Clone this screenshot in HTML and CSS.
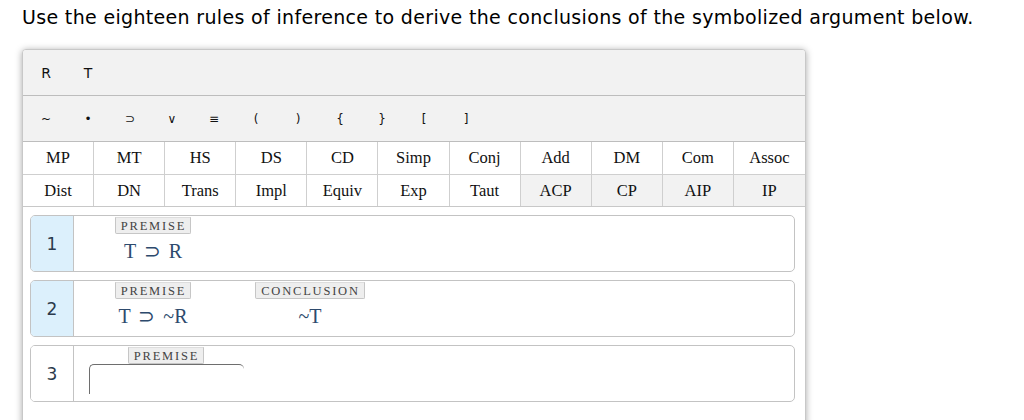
FILE: index.html
```html
<!DOCTYPE html>
<html>
<head>
<meta charset="utf-8">
<link rel="stylesheet" href="styles.css">
</head>
<body>
<p class="title">Use the eighteen rules of inference to derive the conclusions of the symbolized argument below.</p>
<div class="panel">
  <div class="bar vars">
    <span class="key">R</span><span class="key">T</span>
  </div>
  <div class="bar syms">
    <span class="key sym">~</span><span class="key sym">•</span><span class="key sym">⊃</span><span class="key sym">∨</span><span class="key sym">≡</span><span class="key sym">(</span><span class="key sym">)</span><span class="key sym">{</span><span class="key sym">}</span><span class="key sym">[</span><span class="key sym">]</span>
  </div>
  <div class="rules">
    <span class="rule">MP</span><span class="rule">MT</span><span class="rule">HS</span><span class="rule">DS</span><span class="rule">CD</span><span class="rule">Simp</span><span class="rule">Conj</span><span class="rule">Add</span><span class="rule">DM</span><span class="rule">Com</span><span class="rule">Assoc</span>
    <span class="rule">Dist</span><span class="rule">DN</span><span class="rule">Trans</span><span class="rule">Impl</span><span class="rule">Equiv</span><span class="rule">Exp</span><span class="rule">Taut</span><span class="rule alt">ACP</span><span class="rule alt">CP</span><span class="rule alt">AIP</span><span class="rule alt">IP</span>
  </div>
  <div class="lines">
    <div class="line">
      <div class="num given">1</div>
      <div class="body">
        <div class="block">
          <span class="tag">PREMISE</span>
          <span class="formula">T ⊃ R</span>
        </div>
      </div>
    </div>
    <div class="line">
      <div class="num given">2</div>
      <div class="body">
        <div class="block">
          <span class="tag">PREMISE</span>
          <span class="formula">T ⊃ ~R</span>
        </div>
        <div class="block concl">
          <span class="tag">CONCLUSION</span>
          <span class="formula">~T</span>
        </div>
      </div>
    </div>
    <div class="line">
      <div class="num">3</div>
      <div class="body">
        <div class="block entry">
          <span class="tag">PREMISE</span>
          <span class="input"></span>
        </div>
      </div>
    </div>
  </div>
</div>
</body>
</html>
```
FILE: styles.css
```css
html, body {
  margin: 0;
  padding: 0;
  background: #ffffff;
}
body {
  padding: 6px 0 0 22px;
  font-family: "DejaVu Sans", Verdana, sans-serif;
  color: #000;
}
.title {
  margin: 0;
  font-size: 19px;
  line-height: 23px;
  letter-spacing: 0.33px;
  font-weight: normal;
  white-space: nowrap;
}
.panel {
  margin-top: 20px;
  width: 782px;
  height: 400px;
  border: 1px solid #c8c8c8;
  border-radius: 4px 4px 0 0;
  box-shadow: 0 1px 7px rgba(0, 0, 0, 0.35);
  background: #ffffff;
  overflow: hidden;
}
.bar {
  display: flex;
  align-items: center;
  padding-left: 2px;
  background: #f2f2f2;
  border-bottom: 1px solid #bdbdbd;
}
.vars {
  height: 45px;
}
.syms {
  height: 45px;
}
.key {
  width: 42px;
  text-align: center;
  font-size: 14px;
  color: #111;
}
.sym {
  font-size: 12px;
}
.rules {
  display: grid;
  grid-template-columns: repeat(11, 1fr);
  border-bottom: 1px solid #c8c8c8;
}
.rule {
  height: 32px;
  line-height: 32px;
  text-align: center;
  font-family: "Liberation Serif", "Times New Roman", serif;
  font-size: 16.5px;
  color: #111;
  background: #ffffff;
  border-right: 1px solid #cfcfcf;
  border-bottom: 1px solid #cfcfcf;
}
.rule:nth-child(11n) {
  border-right: none;
}
.rule:nth-child(n+12) {
  border-bottom: none;
  height: 31px;
  line-height: 31px;
}
.rule.alt {
  background: #f2f2f2;
}
.lines {
  display: flex;
  flex-direction: column;
  gap: 8px;
  padding: 8px 10px 0 7px;
}
.line {
  display: flex;
  height: 55px;
  border: 1px solid #c3c3c3;
  border-radius: 5px;
  overflow: hidden;
}
.num {
  width: 42px;
  flex: none;
  display: flex;
  align-items: center;
  justify-content: center;
  font-size: 17px;
  color: #2b3a4c;
  border-right: 1px solid #c3c3c3;
  background: #ffffff;
}
.num.given {
  background: #dcf0fc;
}
.body {
  display: flex;
  padding-left: 14px;
}
.block {
  width: 130px;
  display: flex;
  flex-direction: column;
  align-items: center;
}
.concl {
  margin-left: 27px;
}
.tag {
  margin-top: 1px;
  padding: 0 4px 0 5px;
  height: 15px;
  line-height: 16px;
  font-family: "Liberation Serif", "Times New Roman", serif;
  font-size: 12.5px;
  letter-spacing: 1.8px;
  color: #444;
  background: #eeeeee;
  border: 1px solid #c6c6c6;
  border-top-color: #dddddd;
  border-radius: 0 0 2px 2px;
}
.formula {
  margin-top: 6px;
  font-family: "Liberation Serif", "Times New Roman", serif;
  font-size: 20px;
  line-height: 22px;
  color: #2d4a6d;
  word-spacing: 3px;
}
.entry {
  width: 156px;
}
.input {
  margin-top: 0;
  width: 155px;
  height: 30px;
  border-top: 1px solid #6e6e6e;
  border-left: 1px solid #6e6e6e;
  border-radius: 5px 5px 0 0;
  box-sizing: border-box;
}
```
